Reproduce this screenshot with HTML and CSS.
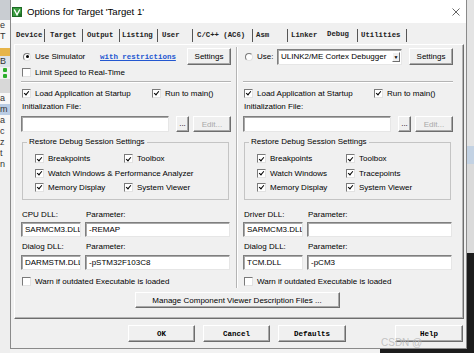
FILE: index.html
```html
<!DOCTYPE html>
<html>
<head>
	<title>Options for Target 'Target 1'</title>
	<link rel="stylesheet" href="styles.css">
</head>
<body>
	<div class="desk-left">
		<div class="dl-top"></div>
		<div class="dl-text">e</div>
		<div class="dl-text">T</div>
		<div class="dl-gap"></div>
		<div class="dl-yellow"></div>
		<div class="dl-text dl-grey">B</div>
		<div class="dl-green"></div>
		<div class="dl-green"></div>
		<div class="dl-band"></div>
		<div class="dl-text">a</div>
		<div class="dl-text dl-sel">m</div>
		<div class="dl-text">a</div>
		<div class="dl-text">c</div>
		<div class="dl-text">z</div>
		<div class="dl-text">t</div>
		<div class="dl-text">n</div>
	</div>

	<div class="dialog">
		<div class="titlebar">
			<svg class="app-icon" width="10" height="10" viewBox="0 0 10 10">
				<rect x="0.5" y="0.5" width="9" height="9" fill="#3a9d3f" stroke="#1e6b26"/>
				<path d="M2.2 2.5 L5 7.8 L7.8 2.5" fill="none" stroke="#fff" stroke-width="1.4"/>
				<rect x="6.6" y="6.6" width="2.6" height="2.6" fill="#1e6b26"/>
			</svg>
			<span class="title">Options for Target 'Target 1'</span>
			<svg class="close" width="8" height="8" viewBox="0 0 8 8">
				<path d="M0.5 0.5 L7.5 7.5 M7.5 0.5 L0.5 7.5" stroke="#555" stroke-width="0.9"/>
			</svg>
		</div>

		<div class="tabs">
			<span class="tab tab-device">Device</span>
			<span class="tab tab-target">Target</span>
			<span class="tab tab-output">Output</span>
			<span class="tab tab-listing">Listing</span>
			<span class="tab tab-user">User</span>
			<span class="tab tab-cc">C/C++ (AC6)</span>
			<span class="tab tab-asm">Asm</span>
			<span class="tab tab-linker">Linker</span>
			<span class="tab tab-debug active">Debug</span>
			<span class="tab tab-util">Utilities</span>
		</div>

		<div class="page">
			<div class="cols">
				<!-- simulator side -->
				<div class="col">
					<div class="top-row">
						<span class="rb on"></span>
						<span class="sim-label">Use Simulator</span>
						<span class="link">with restrictions</span>
						<button class="btn btn-settings">Settings</button>
					</div>
					<div class="limit-row">
						<span class="chk"><span class="cb"></span>Limit Speed to Real-Time</span>
					</div>
					<div class="hsep"></div>
					<div class="load-row">
						<span class="chk"><span class="cb on"></span>Load Application at Startup</span>
						<span class="chk"><span class="cb on"></span>Run to main()</span>
					</div>
					<div class="label-row">Initialization File:</div>
					<div class="file-row">
						<span class="field field-file"></span>
						<button class="btn btn-dots">...</button>
						<button class="btn btn-edit" disabled>Edit...</button>
					</div>
					<fieldset class="group">
						<legend>Restore Debug Session Settings</legend>
						<div class="group-grid">
							<span class="chk"><span class="cb on"></span>Breakpoints</span>
							<span class="chk"><span class="cb on"></span>Toolbox</span>
							<span class="chk span2"><span class="cb on"></span>Watch Windows &amp; Performance Analyzer</span>
							<span class="chk"><span class="cb on"></span>Memory Display</span>
							<span class="chk"><span class="cb on"></span>System Viewer</span>
						</div>
					</fieldset>
					<div class="dll">
						<span class="dll-label">CPU DLL:</span>
						<span class="dll-label">Parameter:</span>
						<span class="field">SARMCM3.DLL</span>
						<span class="field">-REMAP</span>
						<span class="dll-label">Dialog DLL:</span>
						<span class="dll-label">Parameter:</span>
						<span class="field">DARMSTM.DLL</span>
						<span class="field">-pSTM32F103C8</span>
					</div>
					<div class="warn-row">
						<span class="chk"><span class="cb"></span>Warn if outdated Executable is loaded</span>
					</div>
				</div>

				<div class="vsep"></div>

				<!-- target driver side -->
				<div class="col">
					<div class="top-row">
						<span class="rb"></span>
						<span class="use-label">Use:</span>
						<span class="select">ULINK2/ME Cortex Debugger<span class="select-btn">&#9660;</span></span>
						<button class="btn btn-settings">Settings</button>
					</div>
					<div class="limit-row"></div>
					<div class="hsep"></div>
					<div class="load-row">
						<span class="chk"><span class="cb on"></span>Load Application at Startup</span>
						<span class="chk"><span class="cb on"></span>Run to main()</span>
					</div>
					<div class="label-row">Initialization File:</div>
					<div class="file-row">
						<span class="field field-file"></span>
						<button class="btn btn-dots">...</button>
						<button class="btn btn-edit" disabled>Edit...</button>
					</div>
					<fieldset class="group">
						<legend>Restore Debug Session Settings</legend>
						<div class="group-grid">
							<span class="chk"><span class="cb on"></span>Breakpoints</span>
							<span class="chk"><span class="cb on"></span>Toolbox</span>
							<span class="chk"><span class="cb on"></span>Watch Windows</span>
							<span class="chk"><span class="cb on"></span>Tracepoints</span>
							<span class="chk"><span class="cb on"></span>Memory Display</span>
							<span class="chk"><span class="cb on"></span>System Viewer</span>
						</div>
					</fieldset>
					<div class="dll">
						<span class="dll-label">Driver DLL:</span>
						<span class="dll-label">Parameter:</span>
						<span class="field">SARMCM3.DLL</span>
						<span class="field"></span>
						<span class="dll-label">Dialog DLL:</span>
						<span class="dll-label">Parameter:</span>
						<span class="field">TCM.DLL</span>
						<span class="field">-pCM3</span>
					</div>
					<div class="warn-row">
						<span class="chk"><span class="cb"></span>Warn if outdated Executable is loaded</span>
					</div>
				</div>
			</div>
			<div class="manage-row">
				<button class="btn btn-manage">Manage Component Viewer Description Files ...</button>
			</div>
		</div>

		<div class="footer">
			<button class="btn btn-foot">OK</button>
			<button class="btn btn-foot">Cancel</button>
			<button class="btn btn-foot btn-wide">Defaults</button>
			<button class="btn btn-foot btn-wide btn-help">Help</button>
		</div>
	</div>

	<div class="desk-right"></div>

	<div class="watermark">CSDN @</div>
</body>
</html>
```

FILE: styles.css
```css
body {
	margin: 0;
	width: 474px;
	height: 353px;
	overflow: hidden;
	position: relative;
	display: flex;
	align-items: flex-start;
	font-family: "Liberation Sans", Arial, sans-serif;
	font-size: 8px;
	color: #000;
	background: linear-gradient(to right, #f2f2f2 380px, #1c1c1c 380px);
}

/* desktop behind the dialog */
.desk-left {
	width: 10px;
	height: 353px;
	flex: none;
	display: flex;
	flex-direction: column;
	background: #eeeeee;
	overflow: hidden;
}
.dl-top {
	height: 20px;
	background: #c9cdd2;
}
.dl-text {
	height: 11px;
	line-height: 11px;
	font-size: 9px;
	color: #333;
	background: #f7f7f7;
}
.dl-grey {
	background: #dde3ea;
}
.dl-sel {
	background: #b9cce4;
}
.dl-gap {
	height: 6px;
	background: #f7f7f7;
}
.dl-yellow {
	height: 8px;
	background: #e7b54a;
}
.dl-green {
	height: 6px;
	background: radial-gradient(circle at 5px 3px, #2cae2c 2px, #f2f2f2 2.5px);
}
.dl-band {
	height: 14px;
	background: #d8d8d8;
}
.desk-right {
	flex: 1;
	height: 353px;
	background: linear-gradient(to bottom, #e4e4e4 0 146px, #c3d2e3 146px 164px, #dadada 164px 253px, #1c1c1c 253px);
}
.watermark {
	position: absolute;
	left: 381px;
	top: 337px;
	font-size: 10px;
	color: rgba(185, 185, 185, 0.85);
}

/* dialog frame */
.dialog {
	width: 457px;
	height: 349px;
	flex: none;
	box-sizing: border-box;
	border: 1px solid #8a8a8a;
	border-top: 0;
	background: #f0f0f0;
	display: flex;
	flex-direction: column;
}
.titlebar {
	height: 23px;
	flex: none;
	background: #fff;
	display: flex;
	align-items: center;
	padding: 0 6px 0 1px;
}
.title {
	margin-left: 5px;
	font-size: 9.6px;
}
.close {
	margin-left: auto;
}

/* tab strip */
.tabs {
	height: 21px;
	flex: none;
	box-sizing: border-box;
	padding: 6px 0 0 1px;
	display: flex;
	align-items: flex-start;
	font-family: "Liberation Mono", monospace;
	font-size: 7.3px;
	font-weight: bold;
	color: #222;
}
.tab {
	height: 13px;
	line-height: 13px;
	box-sizing: border-box;
	border-right: 1px solid #555;
	padding-left: 4px;
	white-space: nowrap;
}
.tab-device { width: 33px; }
.tab-target { width: 38px; padding-left: 5px; }
.tab-output { width: 37px; }
.tab-listing { width: 38px; padding-left: 2px; }
.tab-user { width: 35px; }
.tab-cc { width: 60px; }
.tab-asm { width: 35px; padding-left: 3px; }
.tab-linker { width: 34px; padding-left: 3px; border-right: 0; }
.tab-debug { width: 36px; padding-left: 5px; }
.tab-util { width: 49px; padding-left: 3px; }
.tab.active {
	line-height: 11px;
}

/* tab page */
.page {
	height: 275px;
	flex: none;
	margin-left: 3px;
	width: 450px;
	box-sizing: border-box;
	border: 1px solid;
	border-color: #fff #6d6d6d #6d6d6d #fff;
	box-shadow: inset -1px -1px #b4b4b4;
	padding: 2px 10px 10px 6px;
}
.cols {
	display: grid;
	grid-template-columns: 210px 12px 210px;
}
.col {
	display: flex;
	flex-direction: column;
}
.vsep {
	justify-self: center;
	width: 0;
	border-left: 1px solid #b4b4b4;
	border-right: 1px solid #fff;
}

.top-row {
	height: 19px;
	display: flex;
	align-items: center;
}
.sim-label {
	width: 65px;
	margin-left: 4px;
}
.use-label {
	width: 20px;
	margin-left: 4px;
}
.link {
	font-family: "Liberation Mono", monospace;
	font-size: 7.45px;
	font-weight: bold;
	color: #2357d0;
	text-decoration: underline;
}
.limit-row {
	height: 12px;
	display: flex;
	align-items: center;
}
.hsep {
	margin: 3px 0;
	border-top: 1px solid #b4b4b4;
	border-bottom: 1px solid #fff;
}
.load-row {
	height: 14px;
	display: grid;
	grid-template-columns: 130px 1fr;
	align-items: center;
}
.label-row {
	height: 14px;
	line-height: 14px;
	padding-left: 1px;
}
.file-row {
	margin-top: 2px;
	height: 16px;
	display: flex;
}
.warn-row {
	margin-top: 4px;
	height: 14px;
	display: flex;
	align-items: center;
}

/* controls */
.chk {
	display: flex;
	align-items: center;
	gap: 4px;
	white-space: nowrap;
	padding-left: 1px;
}
.cb {
	width: 9px;
	height: 9px;
	flex: none;
	box-sizing: border-box;
	border: 1px solid;
	border-color: #7a7a7a #e2e2e2 #e2e2e2 #7a7a7a;
	background: #fff;
	display: grid;
	place-items: center;
}
.cb.on::after {
	content: "";
	width: 2px;
	height: 4px;
	margin-top: -1px;
	border: solid #000;
	border-width: 0 1.5px 1.5px 0;
	transform: rotate(40deg);
}
.rb {
	width: 8px;
	height: 8px;
	margin-left: 2px;
	flex: none;
	box-sizing: border-box;
	border-radius: 50%;
	border: 1px solid;
	border-color: #7a7a7a #e2e2e2 #e2e2e2 #7a7a7a;
	background: #fff;
	display: grid;
	place-items: center;
}
.rb.on::after {
	content: "";
	width: 3px;
	height: 3px;
	border-radius: 50%;
	background: #000;
}
.btn {
	font: inherit;
	color: #000;
	box-sizing: border-box;
	height: 17px;
	padding: 0;
	background: #f0f0f0;
	border: 1px solid;
	border-color: #fff #6d6d6d #6d6d6d #fff;
	box-shadow: inset -1px -1px #a8a8a8;
	white-space: nowrap;
}
.btn-settings {
	width: 44px;
	margin-left: auto;
}
.btn-dots {
	width: 13px;
	height: 16px;
	margin-left: 7px;
	line-height: 8px;
}
.btn-edit {
	width: 38px;
	height: 16px;
	margin-left: 4px;
	color: #a8a8a8;
}
.btn-manage {
	width: 205px;
	height: 16px;
}
.field {
	height: 15px;
	box-sizing: border-box;
	background: #fff;
	border: 1px solid;
	border-color: #7f7f7f #e6e6e6 #e6e6e6 #7f7f7f;
	box-shadow: inset 1px 1px #a8a8a8;
	padding-left: 3px;
	display: flex;
	align-items: center;
	white-space: nowrap;
	overflow: hidden;
}
.field-file {
	width: 148px;
	height: 16px;
}
.select {
	width: 125px;
	height: 16px;
	box-sizing: border-box;
	background: #fff;
	border: 1px solid;
	border-color: #7f7f7f #e6e6e6 #e6e6e6 #7f7f7f;
	box-shadow: inset 1px 1px #a8a8a8;
	padding: 0 1px 0 3px;
	display: flex;
	align-items: center;
	white-space: nowrap;
}
.select-btn {
	margin-left: auto;
	width: 8px;
	height: 10px;
	box-sizing: border-box;
	border: 1px solid;
	border-color: #fff #6d6d6d #6d6d6d #fff;
	background: #f0f0f0;
	font-size: 5px;
	line-height: 8px;
	text-align: center;
}

/* restore settings group */
.group {
	margin: 5px 2px 0 1px;
	padding: 0 0 5px 0;
	min-width: 0;
	border: 1px solid #c4c4c4;
}
.group legend {
	margin-left: 4px;
	padding: 0 2px;
	line-height: 10px;
}
.group-grid {
	display: grid;
	grid-template-columns: 89px 1fr;
	grid-template-rows: 15px 14px 14px;
	align-items: center;
	padding: 4px 0 0 11px;
}
.span2 {
	grid-column: span 2;
}

/* dll fields */
.dll {
	margin-top: 7px;
	display: grid;
	grid-template-columns: 60px 145px;
	grid-template-rows: 14px 15px 16px 15px;
	column-gap: 4px;
	row-gap: 1px;
}
.dll-label {
	align-self: center;
	padding-left: 1px;
}

.manage-row {
	margin-top: 4px;
	display: flex;
	justify-content: center;
}

/* bottom buttons */
.footer {
	display: flex;
	gap: 8px;
	padding: 6px 3px 0 117px;
}
.btn-foot {
	width: 67px;
	font-family: "Liberation Mono", monospace;
	font-size: 7.5px;
	font-weight: bold;
}
.btn-wide {
	width: 68px;
}
.btn-help {
	margin-left: auto;
}
```
